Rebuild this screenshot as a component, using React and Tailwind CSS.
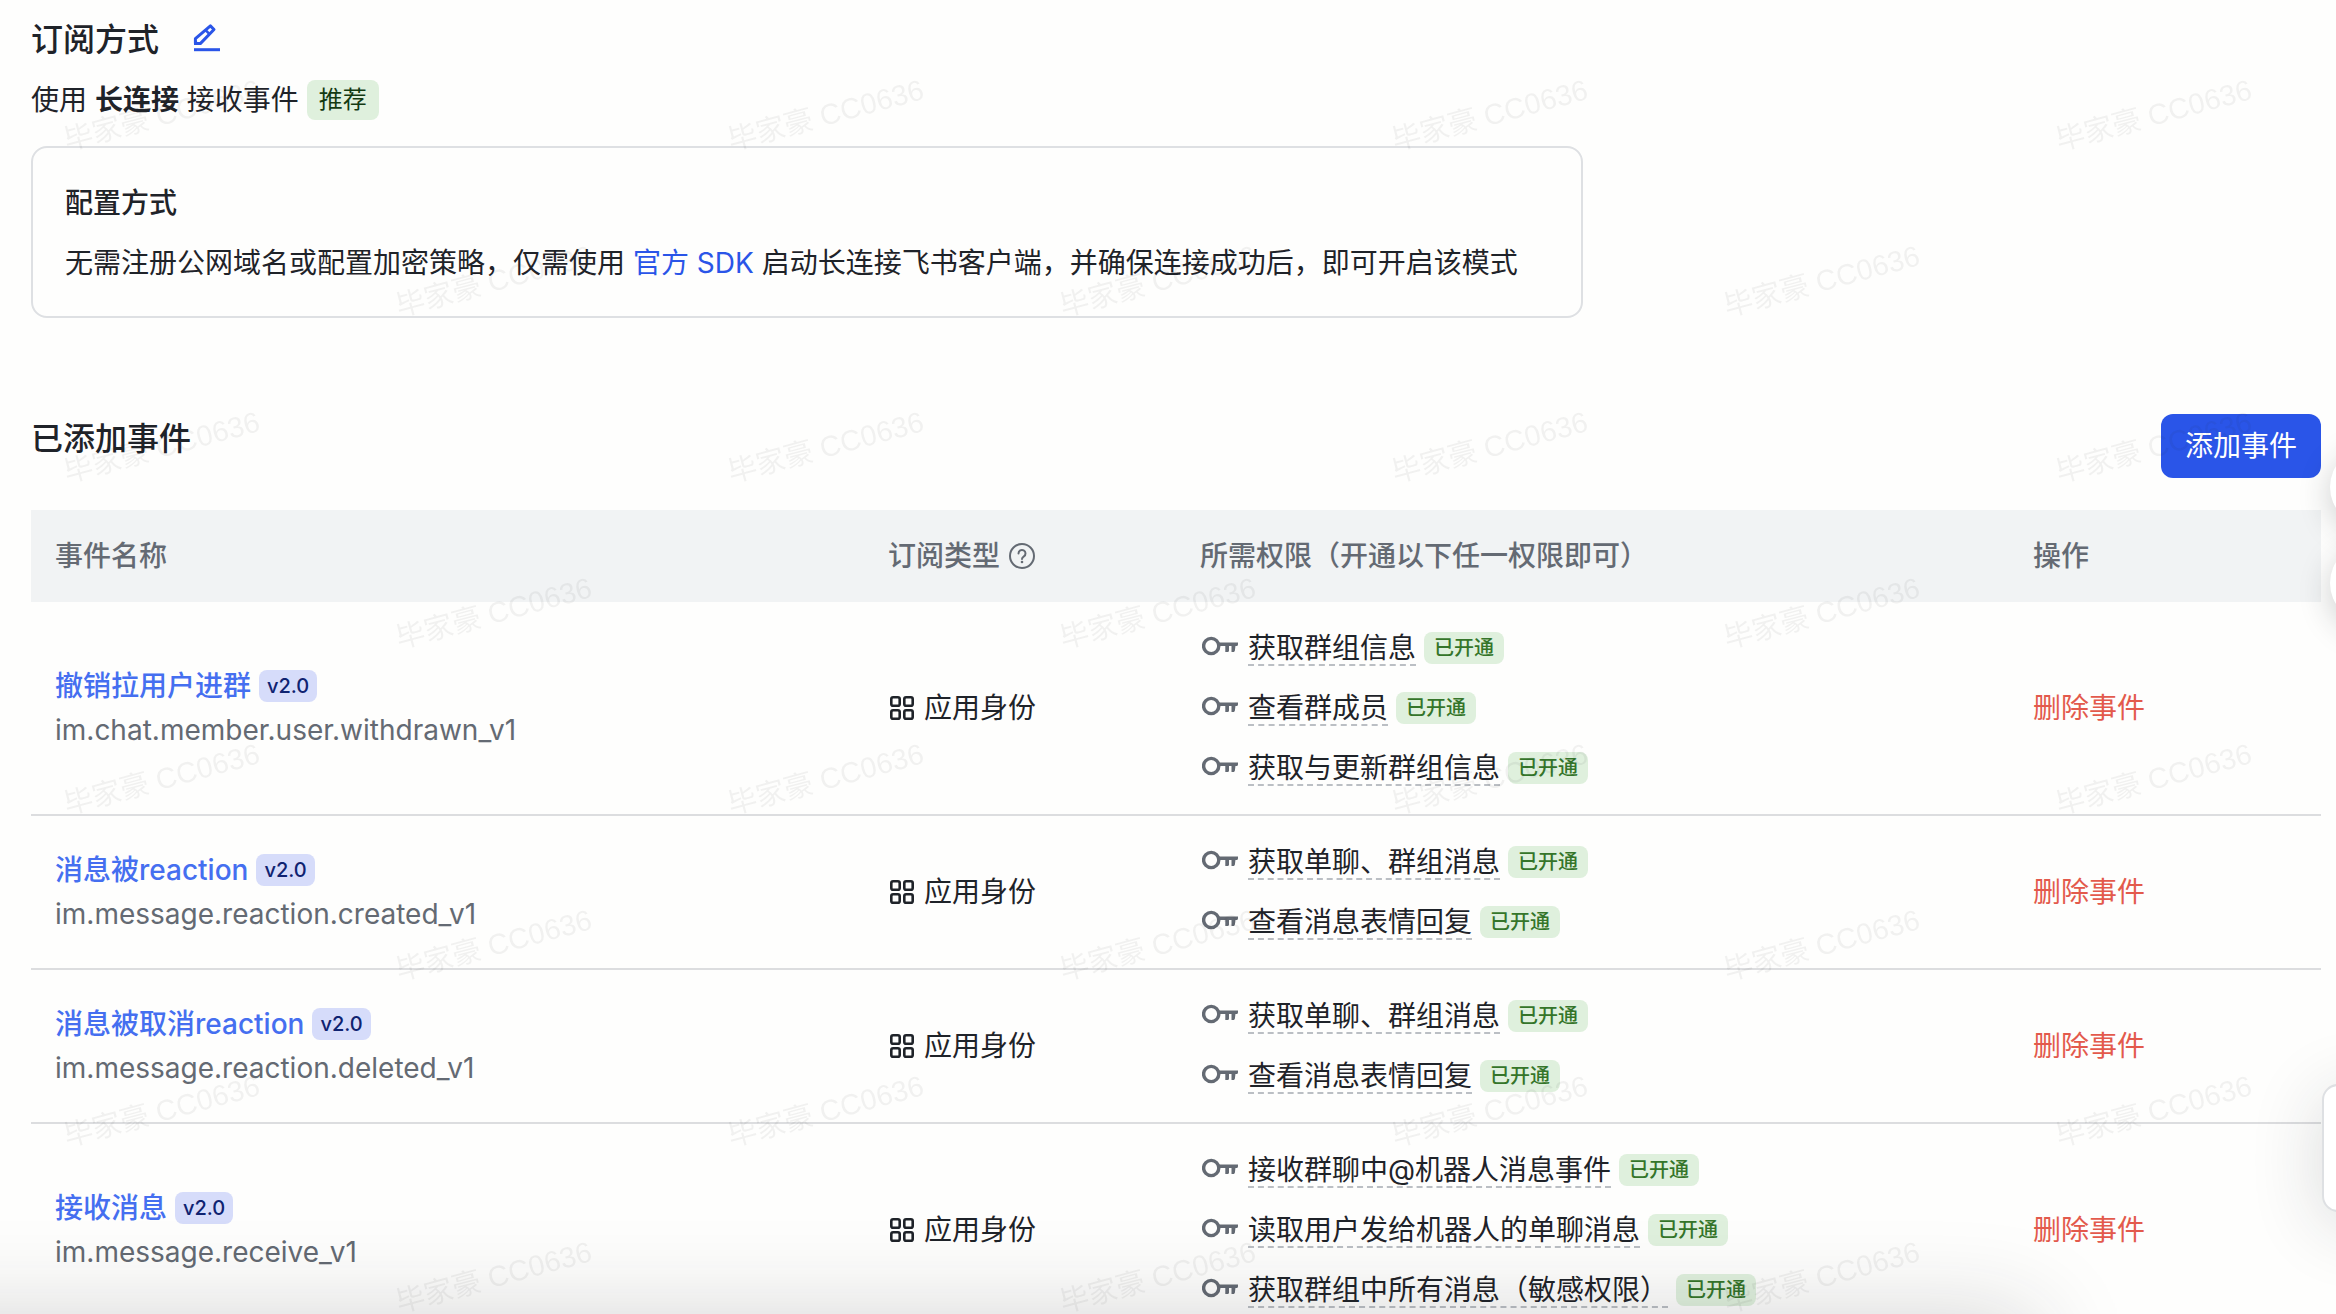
const PERMISO_ABIERTO = '已开通';

const EVENTOS = [
  {
    nombre: '撤销拉用户进群',
    codigo: 'im.chat.member.user.withdrawn_v1',
    permisos: ['获取群组信息', '查看群成员', '获取与更新群组信息'],
  },
  {
    nombre: '消息被reaction',
    codigo: 'im.message.reaction.created_v1',
    permisos: ['获取单聊、群组消息', '查看消息表情回复'],
  },
  {
    nombre: '消息被取消reaction',
    codigo: 'im.message.reaction.deleted_v1',
    permisos: ['获取单聊、群组消息', '查看消息表情回复'],
  },
  {
    nombre: '接收消息',
    codigo: 'im.message.receive_v1',
    permisos: ['接收群聊中@机器人消息事件', '读取用户发给机器人的单聊消息', '获取群组中所有消息（敏感权限）'],
  },
];

function IconEdit() {
  return (
    <svg className="h-8 w-8" viewBox="0 0 32 32" fill="none" stroke="currentColor" strokeWidth="3">
      <path strokeLinejoin="round" d="M19.400 3.900L23 7.500 9.300 21.600H4.400v-4.900z" />
      <path d="M14.800 8.300l4 4" strokeWidth="2.600" />
      <path d="M3 16.800L9.500 23H3z" fill="currentColor" stroke="none" />
      <path d="M3 27.700h26" />
    </svg>
  );
}

function IconHelp() {
  return (
    <svg className="h-7 w-7" viewBox="0 0 28 28" fill="none" stroke="currentColor" strokeWidth="2">
      <circle cx="14" cy="14" r="12" />
      <path strokeLinecap="round" d="M10.500 11.500a3.500 3.500 0 1 1 5.400 2.900c-1.200.8-1.900 1.300-1.900 2.600" />
      <circle cx="14" cy="20" r="1.300" fill="currentColor" stroke="none" />
    </svg>
  );
}

function IconApps() {
  return (
    <svg className="h-7 w-7" viewBox="0 0 28 28" fill="none" stroke="currentColor" strokeWidth="2.600">
      <rect x="3.300" y="3.300" width="8.400" height="8.400" rx="1.800" />
      <rect x="16.300" y="3.300" width="8.400" height="8.400" rx="1.800" />
      <rect x="3.300" y="16.300" width="8.400" height="8.400" rx="1.800" />
      <rect x="16.300" y="16.300" width="8.400" height="8.400" rx="1.800" />
    </svg>
  );
}

function IconKey() {
  return (
    <svg className="h-5 w-9" viewBox="0 0 36 20" fill="none" stroke="#646a73">
      <circle cx="9.200" cy="10" r="7.600" strokeWidth="3.400" />
      <path d="M17.500 6.600H36v1.600c0 1.100-.5 1.800-1.600 1.800H17.500z" fill="#646a73" stroke="none" />
      <path d="M23.300 9.500h3.700v5c0 .9-.5 1.500-1.400 1.500h-2.300zM29.500 9.500h4l-.6 5c-.1.900-.7 1.500-1.600 1.500h-1.800z" fill="#646a73" stroke="none" />
    </svg>
  );
}

function Permiso({ texto }) {
  return (
    <li className="flex h-15 items-center">
      <span className="mb-1 ml-0.5 shrink-0">
        <IconKey />
      </span>
      <span className="ml-2.5 border-b-2 border-dashed border-[#bbbfc4] pt-0.5 leading-8">{texto}</span>
      <span className="ml-2 h-8 rounded-lg bg-[#dff0dd] px-2.5 text-[20px] leading-8 font-medium text-[#35752a]">
        {PERMISO_ABIERTO}
      </span>
    </li>
  );
}

function FilaEvento({ evento }) {
  return (
    <tr className="border-b-2 border-[#dcdddf]">
      <td className="px-6 leading-11">
        <div className="flex items-center">
          <a href="#evento" className="font-medium text-[#456ff0]">{evento.nombre}</a>
          <span className="ml-2 h-8 rounded-lg bg-[#d6dcfa] px-2 text-[20px] leading-8 font-medium text-[#0f2371]">v2.0</span>
        </div>
        <p className="text-[#646a73]">{evento.codigo}</p>
      </td>
      <td className="px-6">
        <div className="flex items-center gap-2">
          <IconApps />
          <span>应用身份</span>
        </div>
      </td>
      <td className="px-6 py-4">
        <ul>
          {evento.permisos.map(p => (
            <Permiso key={p} texto={p} />
          ))}
        </ul>
      </td>
      <td className="px-6">
        <button type="button" className="text-[#e35a4c]">删除事件</button>
      </td>
    </tr>
  );
}

// Marca de agua repetida sobre toda la página, filas impares desplazadas
function MarcaDeAgua() {
  return (
    <div aria-hidden="true" className="pointer-events-none fixed -left-1 top-8 z-30">
      {Array.from({ length: 8 }, (_, fila) => (
        <div key={fila} className={`flex h-[166px] ${fila % 2 ? 'pl-[332px]' : ''}`}>
          {Array.from({ length: fila % 2 ? 3 : 4 }, (_, col) => (
            <div key={col} className="mr-[332px] flex w-[332px] shrink-0 items-center justify-center">
              <span className="-rotate-15 whitespace-nowrap font-['Liberation_Sans','Noto_Sans_CJK_SC',sans-serif] text-[29px] text-[#1f2329]/6">
                毕家豪 CC0636
              </span>
            </div>
          ))}
        </div>
      ))}
    </div>
  );
}

export default function App() {
  return (
    <div className="relative h-screen overflow-hidden bg-[#fefefd] font-['Inter','Noto_Sans_CJK_SC',sans-serif] text-[28px] leading-11 text-[#1f2329]">
      <main className="pt-4 pr-[15px] pl-[31px]">
        {/* Método de suscripción */}
        <section>
          <div className="flex items-center gap-8">
            <h2 className="text-[32px] leading-12 font-medium">订阅方式</h2>
            <button type="button" aria-label="编辑" className="mb-1 text-[#2a55e8]">
              <IconEdit />
            </button>
          </div>
          <div className="mt-4 flex h-10 items-center">
            <p className="leading-[46px]">使用 <strong className="font-bold">长连接</strong> 接收事件</p>
            <span className="ml-2 h-10 rounded-lg bg-[#dff0dd] px-3 text-2xl leading-10 text-[#133a12]">推荐</span>
          </div>
          <div className="mt-6.5 w-full max-w-[1552px] rounded-2xl border-2 border-[#dee0e3] px-8 pt-8 pb-7.5 leading-[46px]">
            <h3 className="font-medium">配置方式</h3>
            <p className="mt-3.5">
              无需注册公网域名或配置加密策略，仅需使用 <a href="#sdk" className="text-[#2a55e8]">官方 SDK</a> 启动长连接飞书客户端，并确保连接成功后，即可开启该模式
            </p>
          </div>
        </section>

        {/* Eventos agregados */}
        <section className="mt-24">
          <div className="flex items-start justify-between">
            <h2 className="text-[32px] leading-[50px] font-medium">已添加事件</h2>
            <button type="button" className="h-16 rounded-xl bg-[#2a55e8] px-6 text-white">添加事件</button>
          </div>
          <table className="mt-8 w-full table-fixed border-collapse text-left">
            <colgroup>
              <col />
              <col className="w-[312px]" />
              <col />
              <col className="w-[312px]" />
            </colgroup>
            <thead>
              <tr className="h-23 bg-[#f1f3f4] text-[#646a73]">
                <th className="px-6 font-medium">事件名称</th>
                <th className="px-6 font-medium">
                  <div className="flex items-center gap-2">
                    订阅类型
                    <IconHelp />
                  </div>
                </th>
                <th className="px-6 font-medium">所需权限（开通以下任一权限即可）</th>
                <th className="px-6 font-medium">操作</th>
              </tr>
            </thead>
            <tbody>
              {EVENTOS.map(e => (
                <FilaEvento key={e.codigo} evento={e} />
              ))}
            </tbody>
          </table>
        </section>
      </main>

      {/* Botones flotantes del borde derecho */}
      <div className="absolute top-[447px] -right-[74px] z-20 flex flex-col gap-4">
        <div className="h-20 w-20 rounded-full bg-white shadow-[0_8px_32px_rgba(31,35,41,0.22)]" />
        <div className="h-20 w-20 rounded-full bg-white shadow-[0_8px_32px_rgba(31,35,41,0.22)]" />
      </div>
      <div className="absolute top-[1084px] -right-[114px] z-20 h-32 w-32 rounded-2xl border-2 border-[#dee0e3] bg-white shadow-[0_12px_72px_rgba(31,35,41,0.16)]" />

      {/* Sombra de la barra inferior */}
      <div className="absolute top-full right-[300px] -left-40 z-20 h-40 shadow-[0_0_96px_rgba(31,35,41,0.18)]" />

      <MarcaDeAgua />
    </div>
  );
}
